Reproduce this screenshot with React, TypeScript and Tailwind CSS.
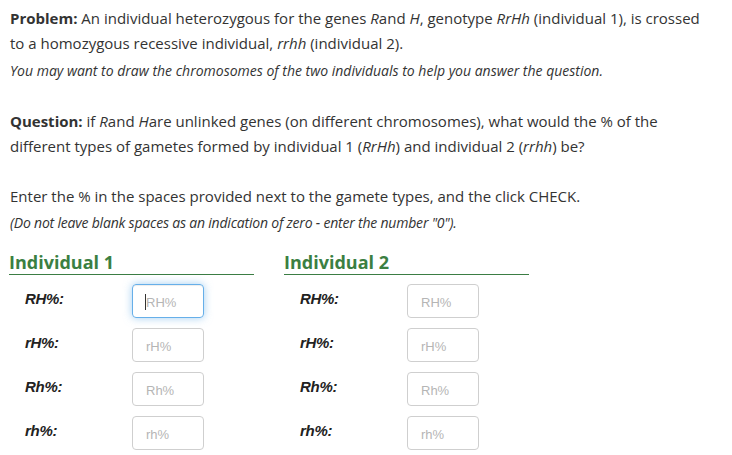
import React from 'react';

// gamete rows shown for each individual
const gametes = [
  { id: "RH", label: "RH%:", placeholder: "RH%" },
  { id: "rH", label: "rH%:", placeholder: "rH%" },
  { id: "Rh", label: "Rh%:", placeholder: "Rh%" },
  { id: "rh", label: "rh%:", placeholder: "rh%" },
];

const Column = ({ title, focusFirst }: { title: string; focusFirst?: boolean }) => {
  return (
    <div className="w-[245px]">
      <h3 className="text-[18px] leading-[22px] font-bold text-[#3b7f42] border-b border-[#3b7d44] pt-[2px] pb-px">
        {title}
      </h3>
      <div className="mt-[9px] flex flex-col gap-[10px]">
        {gametes.map((g, i) => {
          const focused = focusFirst && i === 0;
          return (
            <div key={g.id} className="flex items-start h-[34px]">
              <label
                className="w-[123px] pl-[16px] pt-[4px] text-[15px] font-bold italic text-[#222] tracking-[-0.3px]"
                style={{ fontFamily: '"Liberation Sans", Arial, sans-serif' }}
              >
                {g.label}
              </label>
              <div className="relative">
                <input
                  type="text"
                  placeholder={g.placeholder}
                  className={
                    focused
                      ? "w-[72px] h-[34px] rounded-[4px] border border-[#66afe9] pl-[13px] pt-[2px] text-[13px] text-[#555] placeholder:text-[#b5b5b5] outline-none shadow-[inset_0_1px_1px_rgba(0,0,0,0.075),0_0_8px_rgba(102,175,233,0.6)]"
                      : "w-[72px] h-[34px] rounded-[4px] border border-[#cfcfcf] pl-[13px] pt-[2px] text-[13px] text-[#555] placeholder:text-[#b5b5b5] outline-none"
                  }
                  style={{ fontFamily: '"Liberation Sans", Arial, sans-serif' }}
                />
                {focused && (
                  <span className="absolute left-[13px] top-[10px] w-px h-[16px] bg-[#333]" />
                )}
              </div>
            </div>
          );
        })}
      </div>
    </div>
  );
};

export default function App() {
  return (
    <div
      className="w-[732px] h-[455px] bg-white text-[#333] overflow-hidden"
      style={{ fontFamily: '"Open Sans", "Noto Sans", sans-serif' }}
    >
      <div className="pl-[10px] pt-[6px] pr-[10px]">
        <p className="text-[15px] leading-[25px] w-[700px]">
          <b>Problem:</b> An individual heterozygous for the genes <i>R</i>and <i>H</i>, genotype <i>RrHh</i> (individual 1), is crossed to a homozygous recessive individual, <i>rrhh</i> (individual 2).
        </p>
        <p className="mt-[2px] text-[14px] leading-[25px] italic">
          You may want to draw the chromosomes of the two individuals to help you answer the question.
        </p>

        <p className="mt-[26px] text-[15px] leading-[25px] w-[680px]">
          <b>Question:</b> if <i>R</i>and <i>H</i>are unlinked genes (on different chromosomes), what would the % of the different types of gametes formed by individual 1 (<i>RrHh</i>) and individual 2 (<i>rrhh</i>) be?
        </p>

        <p className="mt-[25px] text-[15px] leading-[25px]">
          Enter the % in the spaces provided next to the gamete types, and the click CHECK.
        </p>
        <p className="mt-px text-[14px] leading-[25px] italic tracking-[-0.2px]">
          (Do not leave blank spaces as an indication of zero - enter the number "0").
        </p>
      </div>

      <div className="mt-[14px] pl-[9px] flex gap-[30px]">
        <Column title="Individual 1" focusFirst />
        <Column title="Individual 2" />
      </div>
    </div>
  );
}
